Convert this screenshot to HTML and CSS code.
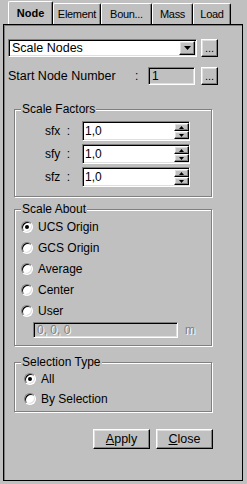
FILE: index.html
```html
<!DOCTYPE html>
<html lang="en">
<head>
  <meta charset="UTF-8">
  <title>Scale Nodes</title>
  <link rel="stylesheet" href="styles.css">
</head>
<body>
  <div class="tabs">
    <div class="tab tab-node active">Node</div>
    <div class="tab tab-element">Element</div>
    <div class="tab tab-boun">Boun...</div>
    <div class="tab tab-mass">Mass</div>
    <div class="tab tab-load">Load</div>
  </div>

  <div class="panel">
    <div class="row">
      <div class="combo">
        <span class="combo-text">Scale Nodes</span>
        <span class="drop">
          <svg width="7" height="4" viewBox="0 0 7 4"><polygon points="0,0 7,0 3.5,4" fill="#000"/></svg>
        </span>
      </div>
      <button class="btn dots">...</button>
    </div>

    <div class="row row-start">
      <span class="label">Start Node Number</span>
      <span class="colon">:</span>
      <div class="field readonly">1</div>
      <button class="btn dots">...</button>
    </div>

    <fieldset class="group factors">
      <legend>Scale Factors</legend>
      <div class="factor">
        <span class="factor-label">sfx :</span>
        <div class="spin">
          <span class="spin-value">1,0</span>
          <span class="spin-btns">
            <span class="spin-btn"><svg width="5" height="3" viewBox="0 0 5 3"><polygon points="2.5,0 5,3 0,3" fill="#000"/></svg></span>
            <span class="spin-btn"><svg width="5" height="3" viewBox="0 0 5 3"><polygon points="0,0 5,0 2.5,3" fill="#000"/></svg></span>
          </span>
        </div>
      </div>
      <div class="factor">
        <span class="factor-label">sfy :</span>
        <div class="spin">
          <span class="spin-value">1,0</span>
          <span class="spin-btns">
            <span class="spin-btn"><svg width="5" height="3" viewBox="0 0 5 3"><polygon points="2.5,0 5,3 0,3" fill="#000"/></svg></span>
            <span class="spin-btn"><svg width="5" height="3" viewBox="0 0 5 3"><polygon points="0,0 5,0 2.5,3" fill="#000"/></svg></span>
          </span>
        </div>
      </div>
      <div class="factor">
        <span class="factor-label">sfz :</span>
        <div class="spin">
          <span class="spin-value">1,0</span>
          <span class="spin-btns">
            <span class="spin-btn"><svg width="5" height="3" viewBox="0 0 5 3"><polygon points="2.5,0 5,3 0,3" fill="#000"/></svg></span>
            <span class="spin-btn"><svg width="5" height="3" viewBox="0 0 5 3"><polygon points="0,0 5,0 2.5,3" fill="#000"/></svg></span>
          </span>
        </div>
      </div>
    </fieldset>

    <fieldset class="group about">
      <legend>Scale About</legend>
      <div class="radio-row"><span class="radio checked"></span>UCS Origin</div>
      <div class="radio-row"><span class="radio"></span>GCS Origin</div>
      <div class="radio-row"><span class="radio"></span>Average</div>
      <div class="radio-row"><span class="radio"></span>Center</div>
      <div class="radio-row"><span class="radio"></span>User</div>
      <div class="user-row">
        <div class="field disabled">0, 0, 0</div>
        <span class="unit">m</span>
      </div>
    </fieldset>

    <fieldset class="group selection">
      <legend>Selection Type</legend>
      <div class="radio-row"><span class="radio checked"></span>All</div>
      <div class="radio-row"><span class="radio"></span>By Selection</div>
    </fieldset>

    <div class="actions">
      <button class="btn push"><u>A</u>pply</button>
      <button class="btn push"><u>C</u>lose</button>
    </div>
  </div>
</body>
</html>
```

FILE: styles.css
```css
body {
  margin: 0;
  width: 247px;
  height: 484px;
  overflow: hidden;
  background: #c0c0c0;
  color: #000;
  font: 12px "Liberation Sans", Arial, sans-serif;
}

/* tabs */
.tabs {
  display: flex;
  align-items: flex-end;
  height: 24px;
  padding-left: 8px;
  box-sizing: border-box;
}

.tab {
  box-sizing: border-box;
  height: 21px;
  border: 1px solid #fff;
  border-right-color: #000;
  border-bottom: 0;
  border-radius: 2px 2px 0 0;
  box-shadow: inset -1px 0 #808080;
  font-size: 11px;
  letter-spacing: -0.3px;
  display: flex;
  align-items: center;
  justify-content: center;
}

.tab.active {
  height: 23px;
  font-weight: bold;
  letter-spacing: 0;
}

.tab-node { width: 45px; }
.tab-element { width: 48px; }
.tab-boun { width: 51px; }
.tab-mass { width: 41px; }
.tab-load { width: 38px; }

/* panel */
.panel {
  box-sizing: border-box;
  width: 240px;
  height: 457px;
  margin-left: 3px;
  padding: 14px 4px 0;
  border: 1px solid #000;
  box-shadow: inset 1px 1px #808080;
}

.row {
  display: flex;
  align-items: center;
  height: 18px;
}

.row-start {
  margin-top: 10px;
}

/* 3d borders */
.combo,
.field,
.spin {
  box-sizing: border-box;
  border: 1px solid;
  border-color: #808080 #fff #fff #808080;
  box-shadow: inset 1px 1px #000, inset -1px -1px #dfdfdf;
}

.btn,
.drop,
.spin-btn {
  box-sizing: border-box;
  background: #c0c0c0;
  border: 1px solid;
  border-color: #fff #000 #000 #fff;
  box-shadow: inset -1px -1px #808080, inset 1px 1px #dfdfdf;
}

.combo {
  width: 189px;
  height: 18px;
  background: #fff;
  display: flex;
  align-items: center;
  padding: 0 1px 0 3px;
  font-size: 12.5px;
}

.drop {
  margin-left: auto;
  width: 16px;
  height: 14px;
  display: flex;
  align-items: center;
  justify-content: center;
}

.btn {
  padding: 0;
  font: inherit;
  color: #000;
}

.dots {
  width: 17px;
  height: 18px;
  margin-left: 4px;
  font-size: 11px;
  line-height: 12px;
}

.label {
  width: 127px;
  font-size: 12.5px;
}

.colon {
  width: 13px;
}

.field {
  height: 18px;
  display: flex;
  align-items: center;
  padding-left: 3px;
}

.readonly {
  width: 47px;
  background: #c0c0c0;
}

.row-start .dots {
  margin-left: 6px;
}

/* group boxes */
.group {
  box-sizing: border-box;
  width: 198px;
  min-width: 0;
  margin: 17px 0 0 6px;
  padding: 5px 0 9px;
  border: 1px solid #808080;
  box-shadow: inset 1px 1px #fff, 1px 1px #fff;
}

.group legend {
  margin-left: 6px;
  padding: 0 1px;
  line-height: 14px;
  background: #c0c0c0;
}

.factor {
  display: flex;
  align-items: center;
  height: 20px;
}

.factor + .factor {
  margin-top: 3px;
}

.factor-label {
  width: 37px;
  margin-left: 30px;
  word-spacing: 3px;
}

.spin {
  width: 108px;
  height: 20px;
  background: #fff;
  display: flex;
  align-items: center;
  padding: 0 0 0 2px;
}

.spin-btns {
  margin-left: auto;
  display: flex;
  flex-direction: column;
}

.spin-btn {
  width: 15px;
  height: 8px;
  display: flex;
  align-items: center;
  justify-content: center;
}

.about {
  margin-top: 5px;
  padding: 0 0 7px;
}

.radio-row {
  display: flex;
  align-items: center;
  gap: 5px;
  height: 21px;
  padding-left: 6px;
}

.radio {
  position: relative;
  box-sizing: border-box;
  width: 12px;
  height: 12px;
  border-radius: 50%;
  background: #fff;
  border: 1px solid;
  border-color: #808080 #fff #fff #808080;
  box-shadow: inset 1px 1px #000, inset -1px -1px #dfdfdf;
}

.radio.checked::after {
  content: "";
  position: absolute;
  left: 3px;
  top: 3px;
  width: 4px;
  height: 4px;
  border-radius: 50%;
  background: #000;
}

.user-row {
  display: flex;
  align-items: center;
  margin: 1px 0 0 18px;
}

.disabled {
  width: 145px;
  height: 16px;
  background: #c0c0c0;
  color: #808080;
  text-shadow: 1px 1px #fff;
}

.unit {
  margin-left: 7px;
  color: #808080;
  text-shadow: 1px 1px #fff;
}

.selection {
  margin-top: 9px;
  padding: 0 0 2px;
}

.selection .radio-row {
  height: 20px;
  padding-left: 9px;
}

.actions {
  width: 199px;
  margin: 17px 0 0 6px;
  display: flex;
  justify-content: flex-end;
  gap: 6px;
}

.push {
  width: 57px;
  height: 20px;
  font-size: 12.5px;
}
```
